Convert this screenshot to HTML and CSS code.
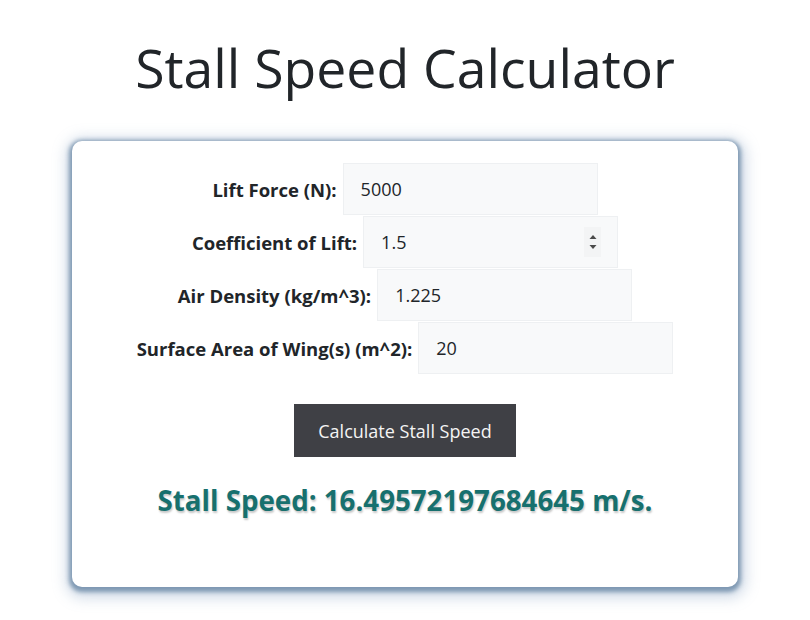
FILE: index.html
```html
<!DOCTYPE html>
<html lang="en">
<head>
<meta charset="utf-8">
<title>Stall Speed Calculator</title>
<link rel="stylesheet" href="styles.css">
</head>
<body>
  <h1 class="title">Stall Speed Calculator</h1>
  <div class="card">
    <form class="calc">
      <div class="row">
        <label class="label" for="lift">Lift Force (N):</label>
        <div class="field"><input class="input" id="lift" type="text" value="5000"></div>
      </div>
      <div class="row">
        <label class="label" for="cl">Coefficient of Lift:</label>
        <div class="field">
          <input class="input" id="cl" type="text" value="1.5">
          <span class="spin">
            <svg width="10" height="20" viewBox="0 0 10 20">
              <path d="M5 3 L8.5 7 L1.5 7 Z" fill="#4a4a4a"/>
              <path d="M1.5 13 L8.5 13 L5 17 Z" fill="#4a4a4a"/>
            </svg>
          </span>
        </div>
      </div>
      <div class="row">
        <label class="label" for="rho">Air Density (kg/m^3):</label>
        <div class="field"><input class="input" id="rho" type="text" value="1.225"></div>
      </div>
      <div class="row">
        <label class="label" for="area">Surface Area of Wing(s) (m^2):</label>
        <div class="field"><input class="input" id="area" type="text" value="20"></div>
      </div>
      <div class="actions">
        <button class="btn" type="button">Calculate Stall Speed</button>
      </div>
    </form>
    <p class="result">Stall Speed: 16.49572197684645 m/s.</p>
  </div>
</body>
</html>
```
FILE: styles.css
```css
* { box-sizing: border-box; }

body {
  margin: 0;
  padding-bottom: 30px;
  background: #ffffff;
  color: #212529;
  font-family: "Open Sans", "Noto Sans", sans-serif;
}

.title {
  margin: 36px 0 0;
  font-size: 53.5px;
  font-weight: 400;
  line-height: 1.2;
  text-align: center;
  color: #212529;
}

.card {
  width: 666px;
  margin: 41px auto 0;
  padding: 22px 20px 68px;
  background: #fff;
  border-radius: 10px;
  box-shadow: 0 2px 4px 3px rgba(105, 135, 165, 0.8), 1px 4px 14px 7px rgba(125, 155, 190, 0.35);
}

.calc {
  display: flex;
  flex-direction: column;
  gap: 1px;
}

.row {
  display: flex;
  justify-content: center;
  align-items: center;
  gap: 6px;
}

.label {
  font-size: 18.5px;
  font-weight: 700;
  color: #212529;
}

.field {
  display: flex;
  align-items: center;
  width: 255px;
  height: 52px;
  background: #f8f9fa;
  border: 1px solid #eef0f2;
}

.input {
  flex: 1;
  min-width: 0;
  height: 100%;
  padding: 0 17px;
  border: 0;
  background: transparent;
  font-family: inherit;
  font-size: 18px;
  color: #212529;
  outline: none;
}

.spin {
  display: flex;
  align-items: center;
  justify-content: center;
  width: 17px;
  height: 30px;
  margin-right: 16px;
  background: #f3f4f5;
}

.actions {
  display: flex;
  justify-content: center;
  margin-top: 29px;
}

.btn {
  width: 222px;
  height: 53px;
  border: 0;
  border-radius: 0;
  background: #3f4045;
  color: #f4f4f4;
  font-family: inherit;
  font-size: 18px;
}

.result {
  margin: 24px 0 0;
  text-align: center;
  font-size: 27.7px;
  font-weight: 700;
  color: #17706e;
  text-shadow: 1px 2px 2px rgba(0, 0, 0, 0.22);
}
```
